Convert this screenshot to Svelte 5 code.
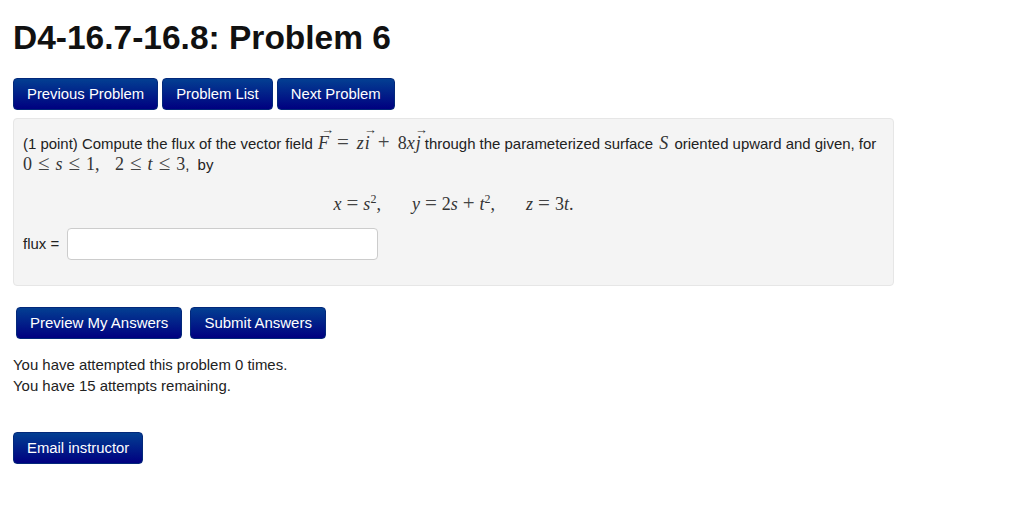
<script>
  const navButtons = ["Previous Problem", "Problem List", "Next Problem"]
</script>

<main>
  <h1>D4-16.7-16.8: Problem 6</h1>

  <div class="nav">
    {#each navButtons as label}
      <button class="btn">{label}</button>
    {/each}
  </div>

  <section class="problem">
    <p class="line">
      (1 point) Compute the flux of the vector field
      <span class="math field"><span class="vec wide"><i>F</i></span><span class="op">=</span><i>z</i><span class="vec"><i>i</i></span><span class="op">+</span>8<i>x</i><span class="vec"><i>j</i></span></span>
      through the parameterized surface <span class="math sym"><i>S</i></span> oriented upward and given, for
    </p>
    <p class="line">
      <span class="math">0<span class="op">≤</span><i>s</i><span class="op">≤</span>1, <span class="sep"></span>2<span class="op">≤</span><i>t</i><span class="op">≤</span>3</span>, &nbsp;by
    </p>
    <p class="display math">
      <span><i>x</i><span class="op">=</span><i>s</i><sup>2</sup>,</span>
      <span><i>y</i><span class="op">=</span>2<i>s</i><span class="op">+</span><i>t</i><sup>2</sup>,</span>
      <span><i>z</i><span class="op">=</span>3<i>t</i>.</span>
    </p>
    <div class="answer">
      <label for="flux">flux =</label>
      <input id="flux" type="text" />
    </div>
  </section>

  <div class="actions">
    <button class="btn">Preview My Answers</button>
    <button class="btn">Submit Answers</button>
  </div>

  <p class="attempts">You have attempted this problem 0 times.<br />You have 15 attempts remaining.</p>

  <button class="btn">Email instructor</button>
</main>

<style>
  :global(body) {
    margin: 0;
    background: #fff;
  }

  main {
    padding: 0 13px;
    font-family: "Liberation Sans", Arial, sans-serif;
    font-size: 14.95px;
    line-height: 21px;
    color: #222;
  }

  h1 {
    margin: 0;
    padding-top: 18px;
    font-size: 33.5px;
    line-height: 40px;
    font-weight: 700;
    color: #111;
  }

  .nav {
    display: flex;
    gap: 4px;
    margin-top: 20px;
  }

  .btn {
    height: 32px;
    padding: 0 13px 1px;
    font-family: inherit;
    font-size: 14.85px;
    color: #fff;
    background: linear-gradient(#033f92, #000080);
    border: 1px solid #03287a;
    border-radius: 4px;
  }

  .problem {
    box-sizing: border-box;
    width: 881px;
    height: 168px;
    margin-top: 8px;
    padding: 14px 9px 0;
    background: #f4f4f4;
    border: 1px solid #e6e6e6;
    border-radius: 4px;
  }

  .line {
    margin: 0;
  }

  .math {
    font-family: "Liberation Serif", "Times New Roman", serif;
    font-size: 18px;
    line-height: 1;
    color: #333;
  }

  .sym {
    padding: 0 2px;
  }

  .op {
    padding: 0 5px;
    font-size: 21px;
    line-height: 0;
    color: #444;
  }

  .line .op {
    padding: 0 6px;
  }

  .line .field .op {
    padding: 0 8px;
  }

  .sep {
    display: inline-block;
    width: 11px;
  }

  .vec {
    position: relative;
    display: inline-block;
    margin-left: 1px;
  }

  .vec::before {
    content: "→";
    position: absolute;
    top: -9px;
    left: -1px;
    font-size: 13px;
    line-height: 10px;
  }

  .vec.wide::before {
    left: 3px;
  }

  sup {
    font-size: 12px;
    line-height: 0;
  }

  .display {
    display: flex;
    justify-content: center;
    gap: 31px;
    margin: 19px 0 0;
    line-height: 21px;
  }

  .answer {
    display: flex;
    align-items: center;
    gap: 8px;
    margin-top: 13px;
  }

  label {
    padding-bottom: 2px;
  }

  input {
    box-sizing: border-box;
    width: 311px;
    height: 32px;
    padding: 0 6px;
    background: #fff;
    border: 1px solid #ccc;
    border-radius: 4px;
  }

  .actions {
    display: flex;
    gap: 8px;
    margin: 21px 0 0 3px;
  }

  .actions .btn {
    font-size: 15px;
  }

  .attempts {
    margin: 15px 0 36px;
  }
</style>
